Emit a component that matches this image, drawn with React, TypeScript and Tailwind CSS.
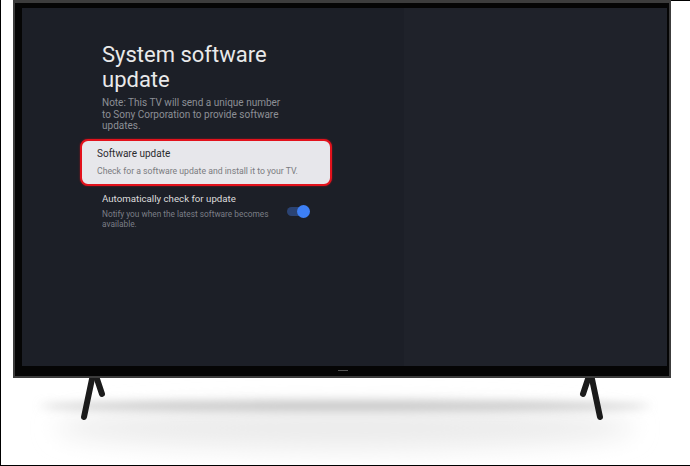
export default function App() {
  return (
    <div className="w-[690px] h-[466px] bg-white border-l border-b border-black flex flex-col font-['Roboto',sans-serif] overflow-hidden">
      <div className="flex h-[378px]">
        <div className="w-[12px] shrink-0" />
        {/* TV bezel */}
        <div className="w-[658px] h-[378px] shrink-0 bg-[#050505] border-2 border-t-[3px] border-[#3c3c3c] pl-[7px] pr-[2px] pt-[5px] pb-[5px] flex flex-col">
          <div className="flex-1 flex">
            {/* settings panel */}
            <div className="w-[382px] bg-[#1c1f27] pl-[58px] pt-[34px] flex flex-col">
              <div className="pl-[22px]">
                <h1 className="text-[22px] leading-[25px] text-[#e9e9ea] whitespace-nowrap">
                  System software
                  <br />
                  update
                </h1>
                <p className="mt-[5px] text-[10px] leading-[11.5px] text-[#8c8f96] whitespace-nowrap">
                  Note: This TV will send a unique number
                  <br />
                  to Sony Corporation to provide software
                  <br />
                  updates.
                </p>
              </div>
              <div className="mt-[7.5px] w-[252px] border-2 border-[#e3121c] rounded-[8px] bg-[#e7e7eb] pl-[15px] pt-[7px] pb-[7.5px] shadow-[0_0_2px_rgba(227,18,28,0.6)]">
                <div className="text-[10px] leading-[12px] text-[#2b2b2e] whitespace-nowrap">Software update</div>
                <div className="mt-[5.5px] text-[8.7px] leading-[11px] text-[#7a7b80] whitespace-nowrap">
                  Check for a software update and install it to your TV.
                </div>
              </div>
              <div className="mt-[7.4px] w-[252px] pl-[22px] pr-[22px] flex items-center justify-between">
                <div>
                  <div className="text-[9.7px] leading-[12px] text-[#dcdcdd] whitespace-nowrap">
                    Automatically check for update
                  </div>
                  <div className="mt-[4px] text-[8.3px] leading-[10px] text-[#7b7e86] whitespace-nowrap">
                    Notify you when the latest software becomes
                    <br />
                    available.
                  </div>
                </div>
                <div className="relative w-[23px] h-[13px] shrink-0">
                  <div className="absolute left-0 top-[2px] w-[18px] h-[9px] rounded-full bg-[#2b4373]" />
                  <div className="absolute right-0 top-0 w-[13px] h-[13px] rounded-full bg-[#3d7ff4]" />
                </div>
              </div>
            </div>
            <div className="flex-1 bg-[#1f222a]" />
          </div>
          <div className="h-[5px] flex justify-center items-end">
            <div className="w-[10px] h-[1px] bg-[#555] mr-[4px]" />
          </div>
        </div>
        <div className="flex-1 border-t border-black" />
      </div>
      {/* stand and floor shadow */}
      <svg width="689" height="87" viewBox="1 378 689 87" className="block">
        <defs>
          <filter id="soft" x="-20%" y="-200%" width="140%" height="500%">
            <feGaussianBlur stdDeviation="12" />
          </filter>
          <filter id="line" x="-10%" y="-300%" width="120%" height="700%">
            <feGaussianBlur stdDeviation="5" />
          </filter>
        </defs>
        <ellipse cx="345" cy="428" rx="290" ry="22" fill="#ececec" filter="url(#soft)" />
        <ellipse cx="345" cy="406" rx="305" ry="5" fill="#c6c6c6" filter="url(#line)" />
        <g stroke="#1b1b1b" strokeLinecap="round" strokeLinejoin="round" fill="none">
          <line x1="92" y1="379" x2="84" y2="417" strokeWidth="6" />
          <line x1="97" y1="379" x2="102" y2="394" strokeWidth="6" />
          <line x1="592" y1="379" x2="600" y2="417" strokeWidth="6" />
          <line x1="588" y1="379" x2="583" y2="394" strokeWidth="6" />
        </g>
      </svg>
    </div>
  )
}
